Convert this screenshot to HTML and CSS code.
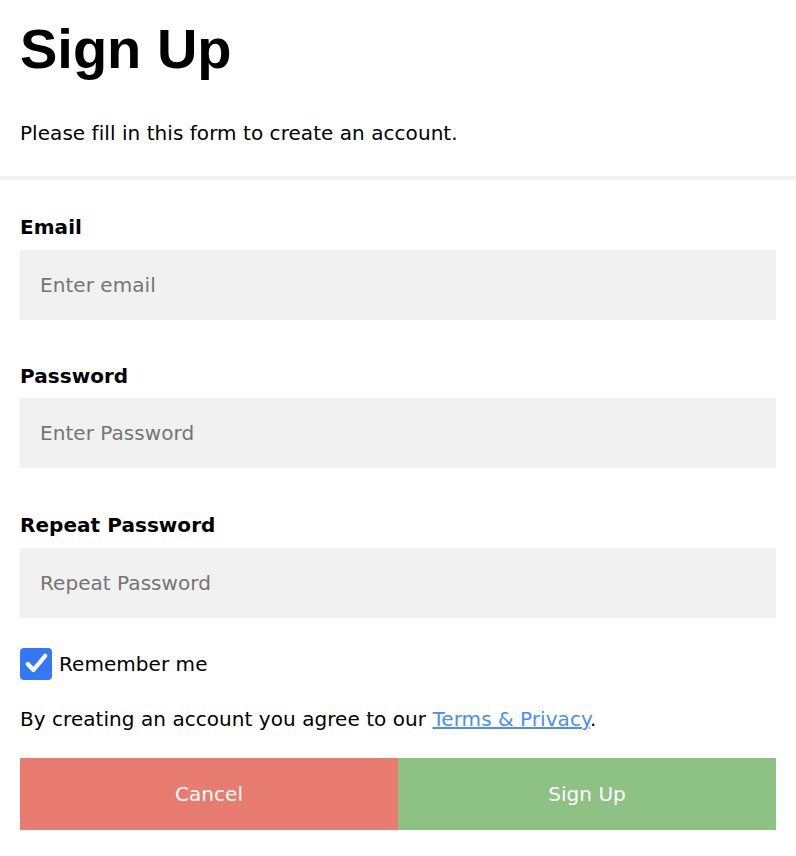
FILE: index.html
```html
<!DOCTYPE html>
<html lang="en">
<head>
<meta charset="utf-8">
<title>Sign Up</title>
<link rel="stylesheet" href="styles.css">
</head>
<body>
  <header class="intro">
    <h1 class="title">Sign Up</h1>
    <p class="lead">Please fill in this form to create an account.</p>
  </header>
  <hr class="divider">
  <form class="form">
    <div class="field">
      <label class="label" for="email">Email</label>
      <input class="input" id="email" type="text" placeholder="Enter email">
    </div>
    <div class="field">
      <label class="label" for="psw">Password</label>
      <input class="input" id="psw" type="password" placeholder="Enter Password">
    </div>
    <div class="field">
      <label class="label" for="psw-repeat">Repeat Password</label>
      <input class="input" id="psw-repeat" type="password" placeholder="Repeat Password">
    </div>
    <label class="remember">
      <span class="check">
        <svg width="32" height="32" viewBox="0 0 32 32"><path d="M7.8 16 L13.4 22 L25.2 7.8" fill="none" stroke="#fff" stroke-width="4.3" stroke-linecap="round" stroke-linejoin="round"/></svg>
      </span>
      <span>Remember me</span>
    </label>
    <p class="terms">By creating an account you agree to our <a class="link" href="#">Terms &amp; Privacy</a>.</p>
    <div class="actions">
      <button type="button" class="btn btn-cancel">Cancel</button>
      <button type="button" class="btn btn-signup">Sign Up</button>
    </div>
  </form>
</body>
</html>
```
FILE: styles.css
```css
html, body {
  margin: 0;
  padding: 0;
  background: #fff;
}
body {
  font-family: "DejaVu Sans", Verdana, sans-serif;
  font-size: 20px;
  line-height: 24px;
  letter-spacing: 0.05px;
  color: #000;
}
.intro {
  padding: 0 20px;
}
.title {
  font-family: "Liberation Sans", Arial, sans-serif;
  font-weight: bold;
  font-size: 56px;
  line-height: 64px;
  letter-spacing: 0;
  margin: 17px 0 0;
}
.lead {
  margin: 40px 0 0;
}
.divider {
  margin: 31px 0 0;
  border: 0;
  height: 4px;
  background: #f1f1f1;
}
.form {
  padding: 35px 20px 0;
  display: flex;
  flex-direction: column;
}
.field {
  display: flex;
  flex-direction: column;
  margin-bottom: 44px;
}
.field:nth-child(2) {
  margin-bottom: 45px;
}
.field:nth-child(3) {
  margin-bottom: 30px;
}
.label {
  font-weight: bold;
  margin-bottom: 11px;
}
.field:nth-child(2) .label {
  margin-bottom: 10px;
}
.input {
  height: 70px;
  box-sizing: border-box;
  border: 0;
  background: #f1f1f1;
  padding: 0 20px;
  font-family: "DejaVu Sans", Verdana, sans-serif;
  font-size: 20px;
  letter-spacing: 0.05px;
  color: #000;
  outline: none;
}
.input::placeholder {
  color: #757575;
}
.remember {
  display: flex;
  align-items: center;
  gap: 7px;
  height: 32px;
}
.check {
  width: 32px;
  height: 32px;
  border-radius: 4px;
  background: #3478f6;
  display: block;
}
.check svg {
  display: block;
}
.terms {
  margin: 27px 0 0;
}
.link {
  color: #4a8ef0;
  text-decoration: underline;
}
.actions {
  display: flex;
  margin-top: 27px;
}
.btn {
  flex: 1;
  height: 72px;
  border: 0;
  color: #fff;
  font-family: "DejaVu Sans", Verdana, sans-serif;
  font-size: 20px;
  letter-spacing: 0.05px;
  cursor: pointer;
}
.btn-cancel {
  background: #e87c70;
}
.btn-signup {
  background: #8ec285;
}
```
